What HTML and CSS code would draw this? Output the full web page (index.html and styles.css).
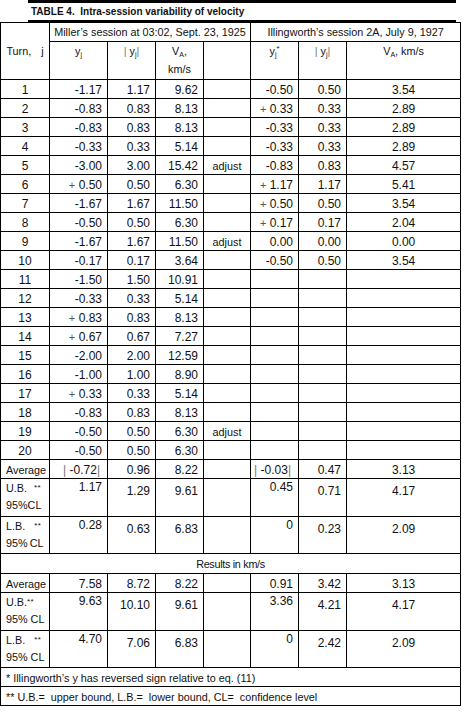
FILE: index.html
```html
<!DOCTYPE html>
<html>
<head>
<meta charset="utf-8">
<title>Table 4</title>
<link rel="stylesheet" href="styles.css">
</head>
<body>
<div class="page">
  <div class="caption">TABLE 4.&nbsp; Intra-session variability of velocity</div>
  <table class="data">
    <colgroup>
      <col class="w1"><col class="w2"><col class="w3"><col class="w4"><col class="w5"><col class="w6"><col class="w7"><col class="w8">
    </colgroup>
    <thead>
      <tr class="r19 hd1">
        <th rowspan="2" class="turn">Turn,<span class="gap">j</span></th>
        <th colspan="4">Miller’s session at 03:02, Sept. 23, 1925</th>
        <th colspan="3">Illingworth’s session 2A, July 9, 1927</th>
      </tr>
      <tr class="r38 hd2">
        <th>y<sub>j</sub></th>
        <th><span class="bar">|</span> y<sub>j</sub><span class="bar">|</span></th>
        <th>V<sub>A</sub>,<br>km/s</th>
        <th></th>
        <th>y<sub>j</sub><sup>*</sup></th>
        <th><span class="bar">|</span> y<sub>j</sub><span class="bar">|</span></th>
        <th>V<sub>A</sub>, km/s</th>
      </tr>
    </thead>
    <tbody>
      <tr class="r19"><td class="t">1</td><td>-1.17</td><td>1.17</td><td>9.62</td><td class="adj"></td><td>-0.50</td><td>0.50</td><td class="v8">3.54</td></tr>
      <tr class="r19"><td class="t">2</td><td>-0.83</td><td>0.83</td><td>8.13</td><td class="adj"></td><td><span class="plus">+</span> 0.33</td><td>0.33</td><td class="v8">2.89</td></tr>
      <tr class="r19"><td class="t">3</td><td>-0.83</td><td>0.83</td><td>8.13</td><td class="adj"></td><td>-0.33</td><td>0.33</td><td class="v8">2.89</td></tr>
      <tr class="r19"><td class="t">4</td><td>-0.33</td><td>0.33</td><td>5.14</td><td class="adj"></td><td>-0.33</td><td>0.33</td><td class="v8">2.89</td></tr>
      <tr class="r19"><td class="t">5</td><td>-3.00</td><td>3.00</td><td>15.42</td><td class="adj">adjust</td><td>-0.83</td><td>0.83</td><td class="v8">4.57</td></tr>
      <tr class="r19"><td class="t">6</td><td><span class="plus">+</span> 0.50</td><td>0.50</td><td>6.30</td><td class="adj"></td><td><span class="plus">+</span> 1.17</td><td>1.17</td><td class="v8">5.41</td></tr>
      <tr class="r19"><td class="t">7</td><td>-1.67</td><td>1.67</td><td>11.50</td><td class="adj"></td><td><span class="plus">+</span> 0.50</td><td>0.50</td><td class="v8">3.54</td></tr>
      <tr class="r19"><td class="t">8</td><td>-0.50</td><td>0.50</td><td>6.30</td><td class="adj"></td><td><span class="plus">+</span> 0.17</td><td>0.17</td><td class="v8">2.04</td></tr>
      <tr class="r19"><td class="t">9</td><td>-1.67</td><td>1.67</td><td>11.50</td><td class="adj">adjust</td><td>0.00</td><td>0.00</td><td class="v8">0.00</td></tr>
      <tr class="r19"><td class="t">10</td><td>-0.17</td><td>0.17</td><td>3.64</td><td class="adj"></td><td>-0.50</td><td>0.50</td><td class="v8">3.54</td></tr>
      <tr class="r19"><td class="t">11</td><td>-1.50</td><td>1.50</td><td>10.91</td><td class="adj"></td><td></td><td></td><td class="v8"></td></tr>
      <tr class="r19"><td class="t">12</td><td>-0.33</td><td>0.33</td><td>5.14</td><td class="adj"></td><td></td><td></td><td class="v8"></td></tr>
      <tr class="r19"><td class="t">13</td><td><span class="plus">+</span> 0.83</td><td>0.83</td><td>8.13</td><td class="adj"></td><td></td><td></td><td class="v8"></td></tr>
      <tr class="r19"><td class="t">14</td><td><span class="plus">+</span> 0.67</td><td>0.67</td><td>7.27</td><td class="adj"></td><td></td><td></td><td class="v8"></td></tr>
      <tr class="r19"><td class="t">15</td><td>-2.00</td><td>2.00</td><td>12.59</td><td class="adj"></td><td></td><td></td><td class="v8"></td></tr>
      <tr class="r19"><td class="t">16</td><td>-1.00</td><td>1.00</td><td>8.90</td><td class="adj"></td><td></td><td></td><td class="v8"></td></tr>
      <tr class="r19"><td class="t">17</td><td><span class="plus">+</span> 0.33</td><td>0.33</td><td>5.14</td><td class="adj"></td><td></td><td></td><td class="v8"></td></tr>
      <tr class="r19"><td class="t">18</td><td>-0.83</td><td>0.83</td><td>8.13</td><td class="adj"></td><td></td><td></td><td class="v8"></td></tr>
      <tr class="r19"><td class="t">19</td><td>-0.50</td><td>0.50</td><td>6.30</td><td class="adj">adjust</td><td></td><td></td><td class="v8"></td></tr>
      <tr class="r19"><td class="t">20</td><td>-0.50</td><td>0.50</td><td>6.30</td><td class="adj"></td><td></td><td></td><td class="v8"></td></tr>
      <tr class="r19"><td class="lab">Average</td><td class="abs"><span class="bar">|</span> -0.72<span class="bar">|</span></td><td>0.96</td><td>8.22</td><td class="adj"></td><td class="abs"><span class="bar">|</span> -0.03<span class="bar">|</span></td><td>0.47</td><td class="v8">3.13</td></tr>
      <tr class="r38 tall"><td class="lab">U.B.<span class="ast sp">**</span><br>95%CL</td><td class="pm">1.17</td><td>1.29</td><td>9.61</td><td class="adj"></td><td class="pm">0.45</td><td>0.71</td><td class="v8">4.17</td></tr>
      <tr class="r37 tall"><td class="lab">L.B.<span class="ast sp2">**</span><br>95%<span class="thin"> </span>CL</td><td class="pm">0.28</td><td>0.63</td><td>6.83</td><td class="adj"></td><td class="pm">0</td><td>0.23</td><td class="v8">2.09</td></tr>
      <tr class="r20"><td colspan="8" class="results">Results in km/s</td></tr>
      <tr class="r19"><td class="lab">Average</td><td>7.58</td><td>8.72</td><td>8.22</td><td class="adj"></td><td>0.91</td><td>3.42</td><td class="v8">3.13</td></tr>
      <tr class="r38 tall"><td class="lab">U.B.<span class="ast">**</span><br>95% CL</td><td class="pm">9.63</td><td>10.10</td><td>9.61</td><td class="adj"></td><td class="pm">3.36</td><td>4.21</td><td class="v8">4.17</td></tr>
      <tr class="r37 tall"><td class="lab">L.B.<span class="ast sp2">**</span><br>95% CL</td><td class="pm">4.70</td><td>7.06</td><td>6.83</td><td class="adj"></td><td class="pm">0</td><td>2.42</td><td class="v8">2.09</td></tr>
      <tr class="r19"><td colspan="8" class="note">* Illingworth’s y has reversed sign relative to eq. (11)</td></tr>
      <tr class="r19"><td colspan="8" class="note">** U.B.=&nbsp; upper bound, L.B.=&nbsp; lower bound, CL=&nbsp; confidence level</td></tr>
    </tbody>
  </table>
</div>
</body>
</html>
```

FILE: styles.css
```css
html, body {
  margin: 0;
  padding: 0;
  background: #ffffff;
}

body {
  font-family: "Liberation Sans", Arial, sans-serif;
  color: #111111;
}

.page {
  width: 474px;
  height: 726px;
  overflow: hidden;
}

.caption {
  box-sizing: border-box;
  margin-left: 28px;
  width: 428px;
  height: 22px;
  border-top: 3px solid #000;
  border-bottom: 2px solid #000;
  padding-left: 3px;
  font-size: 10px;
  font-weight: bold;
  line-height: 17px;
  white-space: nowrap;
}

.data {
  border-collapse: collapse;
  table-layout: fixed;
  width: 461px;
}

.w1 { width: 49px; }
.w2 { width: 58px; }
.w3 { width: 48px; }
.w4 { width: 48px; }
.w5 { width: 47px; }
.w6 { width: 48px; }
.w7 { width: 48px; }
.w8 { width: 114px; }

.r19 { height: 19px; }
.r20 { height: 20px; }
.r37 { height: 37px; }
.r38 { height: 38px; }

th, td {
  border: 1px solid #000;
  padding: 0;
  vertical-align: top;
  overflow: hidden;
  white-space: nowrap;
}

th {
  font-weight: normal;
  font-size: 10.8px;
  line-height: 16px;
  text-align: center;
}

.hd1 th {
  padding-top: 1px;
}

.hd2 th {
  line-height: 18px;
  padding-top: 0;
}

th.turn {
  line-height: 16px;
  padding-top: 20px;
}

.gap {
  margin-left: 10px;
}

sub {
  font-size: 7px;
  vertical-align: -2px;
  line-height: 0;
}

sup {
  font-size: 8px;
  vertical-align: 4px;
  line-height: 0;
}

.bar {
  color: #777;
  line-height: 0;
}

td {
  font-size: 12px;
  line-height: 13px;
  padding-top: 4px;
  padding-right: 5px;
  text-align: right;
}

td.t {
  text-align: center;
  padding-right: 0;
}

td.v8 {
  text-align: center;
  padding-right: 0;
}

td.adj {
  text-align: center;
  padding-right: 0;
  font-size: 10.8px;
}

td.lab {
  text-align: left;
  padding-left: 5px;
  padding-right: 0;
  font-size: 10.8px;
}

td.abs {
  padding-right: 7px;
}

.plus {
  color: #555;
  font-size: 11px;
  line-height: 0;
}

.tall td {
  padding-top: 6px;
}

.tall td.pm {
  padding-top: 2px;
}

.tall td.lab {
  line-height: 17px;
  padding-top: 1px;
}

.ast {
  font-size: 8px;
  vertical-align: 2px;
  letter-spacing: 0.5px;
  line-height: 0;
}

.ast.sp { margin-left: 7px; }
.ast.sp2 { margin-left: 9px; }

.thin {
  letter-spacing: -1px;
}

td.results {
  text-align: center;
  padding-right: 0;
  font-size: 10.8px;
  letter-spacing: -0.3px;
}

td.note {
  text-align: left;
  padding-left: 5px;
  padding-right: 0;
  font-size: 10.8px;
}
```
